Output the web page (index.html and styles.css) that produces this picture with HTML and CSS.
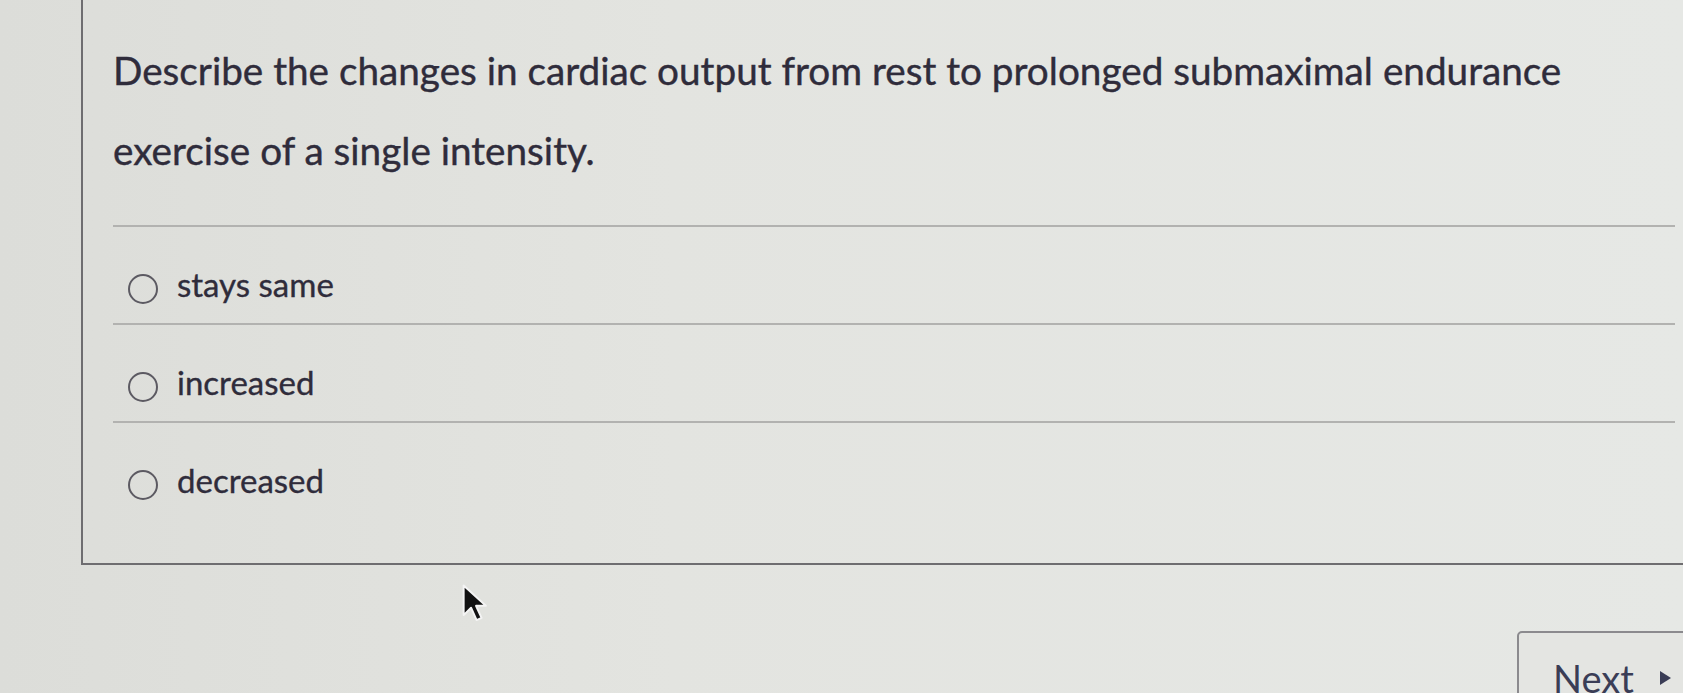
FILE: index.html
```html
<!DOCTYPE html>
<html>
<head>
<meta charset="utf-8">
<link rel="stylesheet" href="styles.css">
</head>
<body>
<div class="page">
  <div class="card">
    <p class="question">Describe the changes in cardiac output from rest to prolonged submaximal endurance exercise of a single intensity.</p>
    <ul class="options">
      <li class="option"><span class="radio"></span><span class="label">stays same</span></li>
      <li class="option"><span class="radio"></span><span class="label">increased</span></li>
      <li class="option"><span class="radio"></span><span class="label">decreased</span></li>
    </ul>
  </div>
  <div class="footer">
    <button class="next">Next <span class="arrow"></span></button>
  </div>
  <svg class="cursor" width="30" height="42" viewBox="0 0 24 34"><path d="M2 2 L2 26 L8 20 L12.5 30 L16.5 28.2 L12 18.5 L20 18.5 Z" fill="#111" stroke="#f4f4f4" stroke-width="1.6" stroke-linejoin="round"/></svg>
</div>
</body>
</html>
```
FILE: styles.css
```css
html, body {
  margin: 0;
  padding: 0;
  height: 100%;
  overflow: hidden;
}
body {
  background: #dfe0dc;
  font-family: Lato, "Open Sans", sans-serif;
  color: #2f2c3b;
}
.page {
  position: relative;
  width: 1683px;
  height: 693px;
  background: linear-gradient(90deg, #dcddd9 0%, #e3e4e0 40%, #e6e8e5 100%);
}
.card {
  margin-left: 81px;
  height: 565px;
  box-sizing: border-box;
  border-left: 2px solid #6e6d70;
  border-bottom: 2px solid #6e6d70;
  padding: 30px 8px 0 30px;
}
.question {
  margin: 0 0 35px 0;
  font-size: 38.7px;
  line-height: 80px;
  width: 1520px;
  -webkit-text-stroke: 0.4px #2f2c3b;
}
.options {
  list-style: none;
  margin: 0;
  padding: 0;
}
.option {
  display: flex;
  align-items: center;
  border-top: 2px solid #b2b2b0;
  padding: 34px 0 16px 15px;
  height: 46px;
}
.radio {
  width: 26px;
  height: 26px;
  border: 2px solid #5c5a62;
  border-radius: 50%;
  margin-right: 19px;
  flex: none;
  position: relative;
  top: 5px;
}
.label {
  font-size: 33px;
  line-height: 46px;
  -webkit-text-stroke: 0.35px #2f2c3b;
}
.footer {
  display: flex;
  justify-content: flex-end;
  margin-top: 66px;
}
.next {
  margin-right: -40px;
  width: 206px;
  height: 80px;
  box-sizing: border-box;
  text-align: left;
  padding: 22px 0 0 34px;
  border: 2px solid #8b8a8e;
  border-radius: 5px 0 0 0;
  background: #e4e5e2;
  font-family: Lato, sans-serif;
  font-size: 38px;
  line-height: 46px;
  color: #3a3d56;
  display: flex;
  align-items: flex-start;
}
.arrow {
  display: inline-block;
  width: 0;
  height: 0;
  border-left: 11px solid #3a3d56;
  border-top: 7px solid transparent;
  border-bottom: 7px solid transparent;
  margin: 16px 0 0 26px;
}
.cursor {
  position: absolute;
  left: 461px;
  top: 583px;
}
```
